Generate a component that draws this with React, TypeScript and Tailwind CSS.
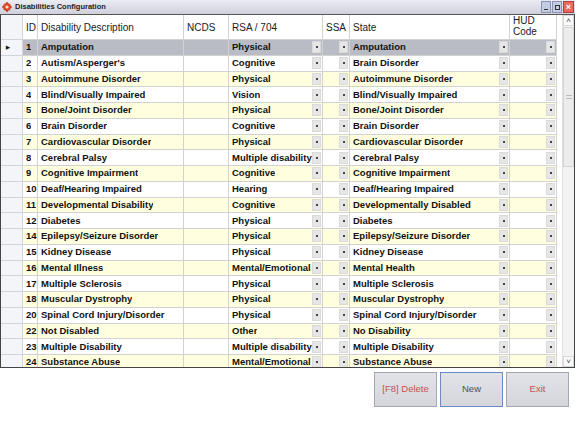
import React from 'react';

type Row = { id: number; desc: string; rsa: string; state: string };

const rows: Row[] = [
  { id: 1, desc: 'Amputation', rsa: 'Physical', state: 'Amputation' },
  { id: 2, desc: "Autism/Asperger's", rsa: 'Cognitive', state: 'Brain Disorder' },
  { id: 3, desc: 'Autoimmune Disorder', rsa: 'Physical', state: 'Autoimmune Disorder' },
  { id: 4, desc: 'Blind/Visually Impaired', rsa: 'Vision', state: 'Blind/Visually Impaired' },
  { id: 5, desc: 'Bone/Joint Disorder', rsa: 'Physical', state: 'Bone/Joint Disorder' },
  { id: 6, desc: 'Brain Disorder', rsa: 'Cognitive', state: 'Brain Disorder' },
  { id: 7, desc: 'Cardiovascular Disorder', rsa: 'Physical', state: 'Cardiovascular Disorder' },
  { id: 8, desc: 'Cerebral Palsy', rsa: 'Multiple disability', state: 'Cerebral Palsy' },
  { id: 9, desc: 'Cognitive Impairment', rsa: 'Cognitive', state: 'Cognitive Impairment' },
  { id: 10, desc: 'Deaf/Hearing Impaired', rsa: 'Hearing', state: 'Deaf/Hearing Impaired' },
  { id: 11, desc: 'Developmental Disability', rsa: 'Cognitive', state: 'Developmentally Disabled' },
  { id: 12, desc: 'Diabetes', rsa: 'Physical', state: 'Diabetes' },
  { id: 14, desc: 'Epilepsy/Seizure Disorder', rsa: 'Physical', state: 'Epilepsy/Seizure Disorder' },
  { id: 15, desc: 'Kidney Disease', rsa: 'Physical', state: 'Kidney Disease' },
  { id: 16, desc: 'Mental Illness', rsa: 'Mental/Emotional', state: 'Mental Health' },
  { id: 17, desc: 'Multiple Sclerosis', rsa: 'Physical', state: 'Multiple Sclerosis' },
  { id: 18, desc: 'Muscular Dystrophy', rsa: 'Physical', state: 'Muscular Dystrophy' },
  { id: 20, desc: 'Spinal Cord Injury/Disorder', rsa: 'Physical', state: 'Spinal Cord Injury/Disorder' },
  { id: 22, desc: 'Not Disabled', rsa: 'Other', state: 'No Disability' },
  { id: 23, desc: 'Multiple Disability', rsa: 'Multiple disability', state: 'Multiple Disability' },
  { id: 24, desc: 'Substance Abuse', rsa: 'Mental/Emotional', state: 'Substance Abuse' },
];

const cols = 'grid grid-cols-[22px_15px_146px_45px_94px_27px_160px_47px]';

const Drop = () => (
  <span className="ml-auto mr-[1px] flex h-[12px] w-[9px] shrink-0 items-center justify-center border border-[#dadada] bg-[#e6e6e6]">
    <span className="h-[2px] w-[2px] bg-[#444]" />
  </span>
);

const Cell = ({ children, drop, className = '' }: { children?: React.ReactNode; drop?: boolean; className?: string }) => (
  <div className={`flex min-w-0 items-center border-r border-b border-[#d2d2d2] pl-[3px] ${className}`}>
    <span className="min-w-0 truncate">{children}</span>
    {drop && <Drop />}
  </div>
);

export default function App() {
  return (
    <div className="h-[432px] w-[575px] overflow-hidden bg-white font-['Liberation_Sans',Arial,sans-serif] text-[#111]">
      {/* title bar */}
      <div className="flex h-[15px] items-center border-b border-[#555] bg-gradient-to-b from-[#ececf4] to-[#cfd0dc] pl-[2px]">
        <svg width="10" height="10" viewBox="0 0 10 10" className="mr-[3px]">
          <circle cx="5" cy="5" r="4" fill="#d84a2a" />
          <circle cx="5" cy="5" r="1.6" fill="#f6e0c0" />
          <path d="M5 0v2M5 8v2M0 5h2M8 5h2" stroke="#a83018" strokeWidth="1.2" />
        </svg>
        <span className="text-[7.5px] font-bold text-[#222]">Disabilities Configuration</span>
        <div className="ml-auto flex items-center gap-[1px] pr-[1px]">
          <span className="flex h-[12px] w-[10px] items-end justify-center border border-[#8a94b4] bg-[#c4cce4] pb-[2px]">
            <span className="h-[1px] w-[4px] bg-[#333]" />
          </span>
          <span className="flex h-[12px] w-[10px] items-center justify-center border border-[#8a94b4] bg-[#c4cce4]">
            <span className="h-[5px] w-[5px] border border-[#333]" />
          </span>
          <span className="flex h-[12px] w-[11px] items-center justify-center border border-[#b04040] bg-[#e66a5e] text-[9px] leading-none font-bold text-white">
            ×
          </span>
        </div>
      </div>

      {/* grid area */}
      <div className="flex h-[353px] border-b border-l border-r border-[#444]">
        <div className="w-[557px] overflow-hidden">
          <div className={`${cols} h-[25px] text-[10px] leading-[11px] text-[#1a1a1a]`}>
            <div className="border-r border-b border-[#d0d4dc] bg-[#f4f5f8]" />
            <div className="flex items-center border-r border-b border-[#d2d2d2] pl-[3px]">ID</div>
            <div className="flex items-center border-r border-b border-[#d2d2d2] pl-[3px]">Disability Description</div>
            <div className="flex items-center border-r border-b border-[#d2d2d2] pl-[3px]">NCDS</div>
            <div className="flex items-center border-r border-b border-[#d2d2d2] pl-[3px]">RSA / 704</div>
            <div className="flex items-center border-r border-b border-[#d2d2d2] pl-[3px]">SSA</div>
            <div className="flex items-center border-r border-b border-[#d2d2d2] pl-[3px]">State</div>
            <div className="flex items-center border-r border-b border-[#d2d2d2] pl-[3px] pb-[2px]">
              HUD
              <br />
              Code
            </div>
          </div>
          {rows.map((r, i) => {
            const bg = i === 0 ? 'bg-[#b9bcc4]' : i % 2 === 0 ? 'bg-[#ffffe0]' : 'bg-white';
            return (
              <div key={r.id} className={`${cols} h-[15.75px] text-[9.5px] font-bold`}>
                <div className="flex items-center border-r border-b border-[#d0d4dc] bg-[#f4f5f8] pl-[5px]">
                  {i === 0 && <span className="text-[5px] leading-none text-[#111]">▶</span>}
                </div>
                <Cell className={bg}>{r.id}</Cell>
                <Cell className={bg}>{r.desc}</Cell>
                <Cell className={bg} />
                <Cell className={bg} drop>{r.rsa}</Cell>
                <Cell className={bg} drop />
                <Cell className={bg} drop>{r.state}</Cell>
                <Cell className={bg} drop />
              </div>
            );
          })}
        </div>
        {/* scrollbar */}
        <div className="ml-[4px] flex w-[12px] flex-col border-l border-[#e0e0e0] bg-[#f3f3f3]">
          <div className="flex h-[11px] items-center justify-center border border-[#d8d8d8] bg-[#fafafa] text-[8px] leading-none text-[#444]">
            ˄
          </div>
          <div className="mt-[1px] flex h-[140px] items-center justify-center border border-[#d4d4d4] bg-[#ececec]">
            <span className="h-[4px] w-[6px] border-y border-[#bbb]" />
          </div>
          <div className="flex-1" />
          <div className="flex h-[11px] items-center justify-center border border-[#d8d8d8] bg-[#fafafa] text-[8px] leading-none text-[#444]">
            ˅
          </div>
        </div>
      </div>

      {/* buttons */}
      <div className="flex justify-end gap-[3px] pt-[4px] pr-[6px] text-[9.5px]">
        <button className="h-[35px] w-[63px] border border-[#a4a8b0] bg-gradient-to-b from-[#e2e3e8] to-[#d4d6dc] text-[#c85050]">
          [F8] Delete
        </button>
        <button className="h-[35px] w-[63px] border border-[#6a8cc4] bg-gradient-to-b from-[#e2e3e8] to-[#d4d6dc] text-[#505050]">
          New
        </button>
        <button className="h-[35px] w-[63px] border border-[#a4a8b0] bg-gradient-to-b from-[#e2e3e8] to-[#d4d6dc] text-[#c85050]">
          Exit
        </button>
      </div>
    </div>
  );
}
